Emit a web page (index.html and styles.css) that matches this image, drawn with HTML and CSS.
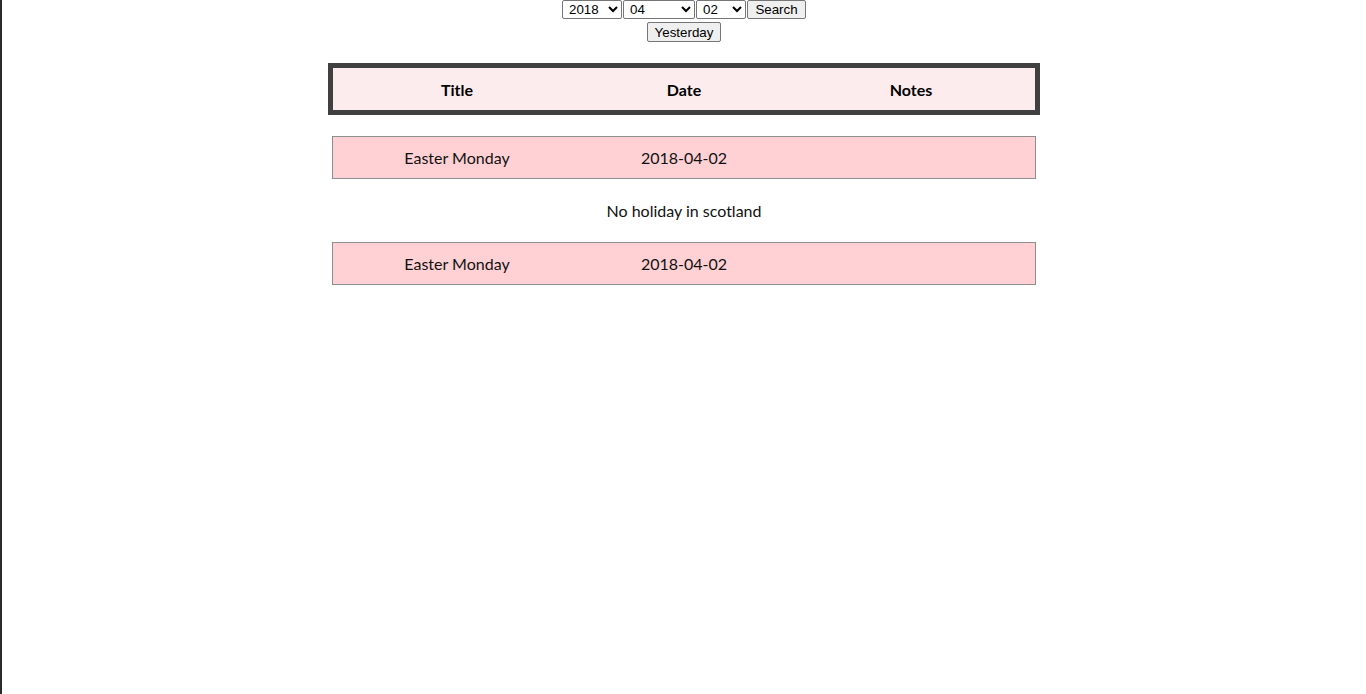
FILE: index.html
```html
<!DOCTYPE html>
<html>
<head>
<meta charset="utf-8">
<link rel="stylesheet" href="styles.css">
</head>
<body>
<div class="controls">
  <div class="line">
    <select class="sel sel-year"><option>2018</option></select><select class="sel sel-month"><option>04</option></select><select class="sel sel-day"><option>02</option></select><button class="btn btn-search">Search</button>
  </div>
  <div class="line">
    <button class="btn btn-yesterday">Yesterday</button>
  </div>
</div>
<div class="list">
  <div class="head grid">
    <div class="cell">Title</div>
    <div class="cell">Date</div>
    <div class="cell">Notes</div>
  </div>
  <div class="row grid first">
    <div class="cell">Easter Monday</div>
    <div class="cell">2018-04-02</div>
    <div class="cell"></div>
  </div>
  <div class="empty">No holiday in scotland</div>
  <div class="row grid">
    <div class="cell">Easter Monday</div>
    <div class="cell">2018-04-02</div>
    <div class="cell"></div>
  </div>
</div>
</body>
</html>
```
FILE: styles.css
```css
html, body { margin: 0; padding: 0; }
body {
  border-left: 2px solid #2b2b2b;
  min-height: 694px;
  box-sizing: border-box;
  background: #fff;
  font-family: "Lato", "Open Sans", sans-serif;
  color: #111;
}
.controls { text-align: center; font-family: "Liberation Sans", Arial, sans-serif; }
.line { display: flex; justify-content: center; align-items: flex-start; }
.line + .line { margin-top: 3px; }
.sel {
  font: 13.33px "Liberation Sans", Arial, sans-serif;
  height: 19px;
  margin: 0;
  border: 1px solid #767676;
  border-radius: 2px;
  background: #fff;
  color: #000;
  padding: 0 0 0 2px;
}
.sel-year { width: 60px; margin-right: 1px; }
.sel-month { width: 72px; margin-right: 1px; }
.sel-day { width: 50px; }
.btn {
  font: 13.33px "Liberation Sans", Arial, sans-serif;
  height: 20px;
  margin: 0;
  padding: 0 6px;
  border: 1px solid #767676;
  border-radius: 2px;
  background: #efefef;
  color: #000;
}
.btn-search { width: 59px; height: 19px; margin-left: 1px; }
.btn-yesterday { width: 74px; }
.list { width: 712px; margin: 21px auto 0; display: flex; flex-direction: column; align-items: center; }
.grid { display: grid; grid-template-columns: 248px 206px 248px; align-items: center; }
.cell { text-align: center; font-size: 16px; }
.head {
  width: 712px;
  box-sizing: border-box;
  height: 52px;
  border: 5px solid #404040;
  background: #fdeced;
}
.head .cell { font-weight: 700; color: #000; }
.row {
  width: 704px;
  box-sizing: border-box;
  height: 43px;
  border: 1px solid #8e8e8e;
  background: #ffd1d4;
}
.row.first { margin-top: 21px; }
.empty { height: 63px; line-height: 64px; text-align: center; font-size: 16px; }
```
